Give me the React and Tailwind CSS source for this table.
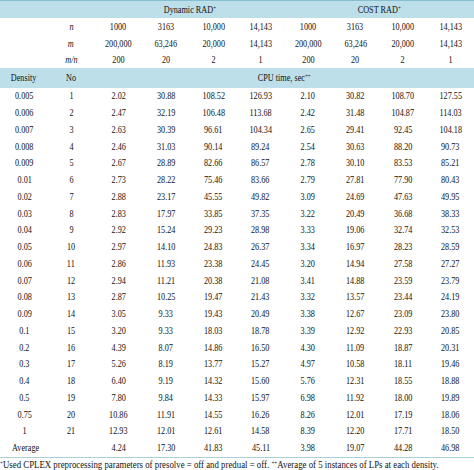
import React from "react";

const rows = [
  ["0.005", "1", "2.02", "30.88", "108.52", "126.93", "2.10", "30.82", "108.70", "127.55"],
  ["0.006", "2", "2.47", "32.19", "106.48", "113.68", "2.42", "31.48", "104.87", "114.03"],
  ["0.007", "3", "2.63", "30.39", "96.61", "104.34", "2.65", "29.41", "92.45", "104.18"],
  ["0.008", "4", "2.46", "31.03", "90.14", "89.24", "2.54", "30.63", "88.20", "90.73"],
  ["0.009", "5", "2.67", "28.89", "82.66", "86.57", "2.78", "30.10", "83.53", "85.21"],
  ["0.01", "6", "2.73", "28.22", "75.46", "83.66", "2.79", "27.81", "77.90", "80.43"],
  ["0.02", "7", "2.88", "23.17", "45.55", "49.82", "3.09", "24.69", "47.63", "49.95"],
  ["0.03", "8", "2.83", "17.97", "33.85", "37.35", "3.22", "20.49", "36.68", "38.33"],
  ["0.04", "9", "2.92", "15.24", "29.23", "28.98", "3.33", "19.06", "32.74", "32.53"],
  ["0.05", "10", "2.97", "14.10", "24.83", "26.37", "3.34", "16.97", "28.23", "28.59"],
  ["0.06", "11", "2.86", "11.93", "23.38", "24.45", "3.20", "14.94", "27.58", "27.27"],
  ["0.07", "12", "2.94", "11.21", "20.38", "21.08", "3.41", "14.88", "23.59", "23.79"],
  ["0.08", "13", "2.87", "10.25", "19.47", "21.43", "3.32", "13.57", "23.44", "24.19"],
  ["0.09", "14", "3.05", "9.33", "19.43", "20.49", "3.38", "12.67", "23.09", "23.80"],
  ["0.1", "15", "3.20", "9.33", "18.03", "18.78", "3.39", "12.92", "22.93", "20.85"],
  ["0.2", "16", "4.39", "8.07", "14.86", "16.50", "4.30", "11.09", "18.87", "20.31"],
  ["0.3", "17", "5.26", "8.19", "13.77", "15.27", "4.97", "10.58", "18.11", "19.46"],
  ["0.4", "18", "6.40", "9.19", "14.32", "15.60", "5.76", "12.31", "18.55", "18.88"],
  ["0.5", "19", "7.80", "9.84", "14.33", "15.97", "6.98", "11.92", "18.00", "19.89"],
  ["0.75", "20", "10.86", "11.91", "14.55", "16.26", "8.26", "12.01", "17.19", "18.06"],
  ["1", "21", "12.93", "12.01", "12.61", "14.58", "8.39", "12.20", "17.71", "18.50"],
  ["Average", "", "4.24", "17.30", "41.83", "45.11", "3.98", "19.07", "44.28", "46.98"],
];

const headerRows = [
  ["n", ["1000", "3163", "10,000", "14,143", "1000", "3163", "10,000", "14,143"]],
  ["m", ["200,000", "63,246", "20,000", "14,143", "200,000", "63,246", "20,000", "14,143"]],
  ["m/n", ["200", "20", "2", "1", "200", "20", "2", "1"]],
];

function T({ children, className = "" }) {
  return <span className={"inline-block whitespace-nowrap scale-x-[0.82] " + className}>{children}</span>;
}

export default function App() {
  return (
    <div className="w-[474px] h-[470px] overflow-hidden bg-white text-[#141414] font-['Liberation_Serif',serif] text-[10px] leading-none">
      {/* top band */}
      <div className="grid grid-cols-10 h-[18px] bg-[#bddfe9] border-t-[1.5px] border-[#86bfd1]">
        <div className="col-span-2" />
        <div className="col-span-4 flex items-center justify-center">
          <T>
            Dynamic RAD<sup className="text-[6px]">+</sup>
          </T>
        </div>
        <div className="col-span-4 flex items-center justify-center">
          <T>
            COST RAD<sup className="text-[6px]">+</sup>
          </T>
        </div>
      </div>
      {headerRows.map(([label, vals], i) => (
        <div key={label} className={"grid grid-cols-10 items-center text-center " + (i === 2 ? "h-[16px]" : "h-[17px]")}>
          <div />
          <div>
            <T className="italic">{label}</T>
          </div>
          {vals.map((v, j) => (
            <div key={j}>
              <T>{v}</T>
            </div>
          ))}
        </div>
      ))}
      {/* second band */}
      <div className="grid grid-cols-10 h-[20px] items-center bg-[#bddfe9] text-center">
        <div>
          <T>Density</T>
        </div>
        <div>
          <T>No</T>
        </div>
        <div className="col-span-8">
          <T>
            CPU time, sec<sup className="text-[6px]">++</sup>
          </T>
        </div>
      </div>
      {rows.map((r, i) => (
        <div key={i} className="grid grid-cols-10 h-[16.76px] items-center text-center">
          {r.map((v, j) => (
            <div key={j} className={j === 0 && v === "Average" ? "pl-[3px]" : j === 0 ? "pl-[2px]" : ""}>
              <T>{v}</T>
            </div>
          ))}
        </div>
      ))}
      <div className="border-t-[1.5px] border-[#a8cfdb] pt-[2px]">
        <span className="inline-block whitespace-nowrap origin-left scale-x-[0.88] text-[10px]">
          <sup className="text-[6px]">+</sup>Used CPLEX preprocessing parameters of presolve = off and predual = off.{" "}
          <sup className="text-[6px]">++</sup>Average of 5 instances of LPs at each density.
        </span>
      </div>
    </div>
  );
}
